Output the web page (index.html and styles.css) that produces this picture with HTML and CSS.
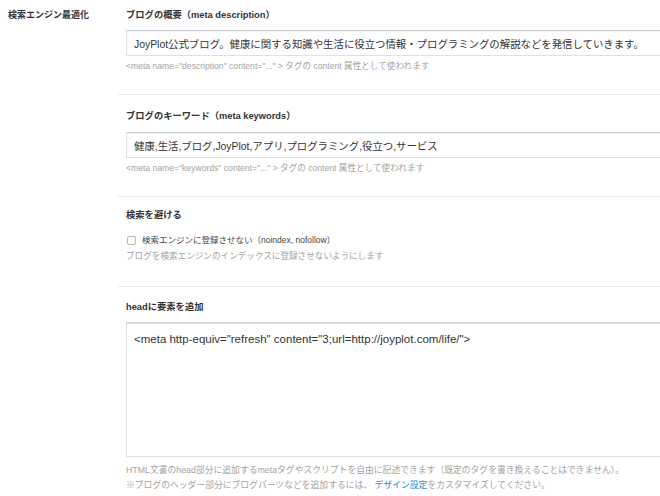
FILE: index.html
```html
<!DOCTYPE html>
<html lang="ja">
<head>
    <meta charset="UTF-8">
    <title>検索エンジン最適化</title>
    <link rel="stylesheet" href="styles.css">
</head>
<body>
    <div class="settings">
        <div class="label">検索エンジン最適化</div>

        <div class="fields">
            <div class="field first">
                <h3>ブログの概要（meta description）</h3>
                <input class="text" type="text" value="JoyPlot公式ブログ。健康に関する知識や生活に役立つ情報・プログラミングの解説などを発信していきます。">
                <p class="hint">&lt;meta name="description" content="..." &gt; タグの content 属性として使われます</p>
            </div>

            <div class="field">
                <h3>ブログのキーワード（meta keywords）</h3>
                <input class="text" type="text" value="健康,生活,ブログ,JoyPlot,アプリ,プログラミング,役立つ,サービス">
                <p class="hint">&lt;meta name="keywords" content="..." &gt; タグの content 属性として使われます</p>
            </div>

            <div class="field">
                <h3>検索を避ける</h3>
                <label class="check"><input type="checkbox"> 検索エンジンに登録させない（noindex, nofollow）</label>
                <p class="hint">ブログを検索エンジンのインデックスに登録させないようにします</p>
            </div>

            <div class="field last">
                <h3>headに要素を追加</h3>
                <textarea class="area">&lt;meta http-equiv="refresh" content="3;url=http://joyplot.com/life/"&gt;</textarea>
                <p class="hint notes">HTML文書のhead部分に追加するmetaタグやスクリプトを自由に記述できます（既定のタグを書き換えることはできません）。<br>
                ※ブログのヘッダー部分にブログパーツなどを追加するには、 <a href="#">デザイン設定</a>をカスタマイズしてください。</p>
            </div>
        </div>
    </div>
</body>
</html>
```

FILE: styles.css
```css
body {
    margin: 0;
    background-color: #fff;
    color: #333;
    font-family: "Liberation Sans", "Noto Sans CJK JP", sans-serif;
    overflow: hidden;
}

.settings {
    display: flex;
}

.label {
    width: 110px;
    flex: none;
    padding: 9px 0 0 8px;
    font-size: 9px;
    line-height: 12px;
    font-weight: bold;
}

.fields {
    flex: 1;
    min-width: 0;
}

.field {
    padding: 12px 0 24px 8px;
    border-bottom: 1px solid #e6e8ea;
}

.field.first {
    padding-top: 9px;
    padding-bottom: 22px;
}

.field:nth-child(2) {
    padding-top: 15px;
    padding-bottom: 22px;
}

.field.last {
    padding-top: 14px;
    border-bottom: none;
}

h3 {
    margin: 0 0 9px;
    font-size: 9.3px;
    line-height: 12px;
    font-weight: bold;
}

.field:nth-child(2) h3 {
    margin-bottom: 10px;
}

.text {
    display: block;
    box-sizing: border-box;
    width: 560px;
    height: 26px;
    margin: 0;
    padding: 0 7px;
    border: 1px solid #dde1e4;
    border-top-color: #c9ced3;
    box-shadow: inset 0 1px 1px rgba(0, 0, 0, 0.04);
    font-family: "Liberation Sans", "Noto Sans CJK JP", sans-serif;
    font-size: 10.4px;
    color: #333;
    outline: none;
}

.hint {
    margin: 4px 0 0;
    font-size: 8.6px;
    line-height: 12px;
    color: #a3a3a3;
}

.check {
    display: flex;
    align-items: center;
    gap: 4px;
    margin-top: 12px;
    font-size: 8.5px;
    line-height: 14px;
    color: #444;
}

.check input {
    appearance: none;
    -webkit-appearance: none;
    width: 9px;
    height: 9px;
    margin: 0 2px 0 1px;
    border: 1px solid #b8b8b8;
    border-radius: 2px;
    background-color: #fff;
}

.check + .hint {
    margin-top: 3px;
}

.area {
    display: block;
    box-sizing: border-box;
    width: 560px;
    height: 135px;
    margin: 0;
    padding: 8px 7px;
    border: 1px solid #dde1e4;
    border-top: 2px solid #d3d8dc;
    resize: none;
    font-family: "Liberation Sans", "Noto Sans CJK JP", sans-serif;
    font-size: 11.5px;
    line-height: 14px;
    color: #333;
    outline: none;
}

.notes {
    margin-top: 6px;
    font-size: 8.8px;
    line-height: 15px;
}

.notes a {
    color: #2d8fd5;
    text-decoration: none;
}
```
